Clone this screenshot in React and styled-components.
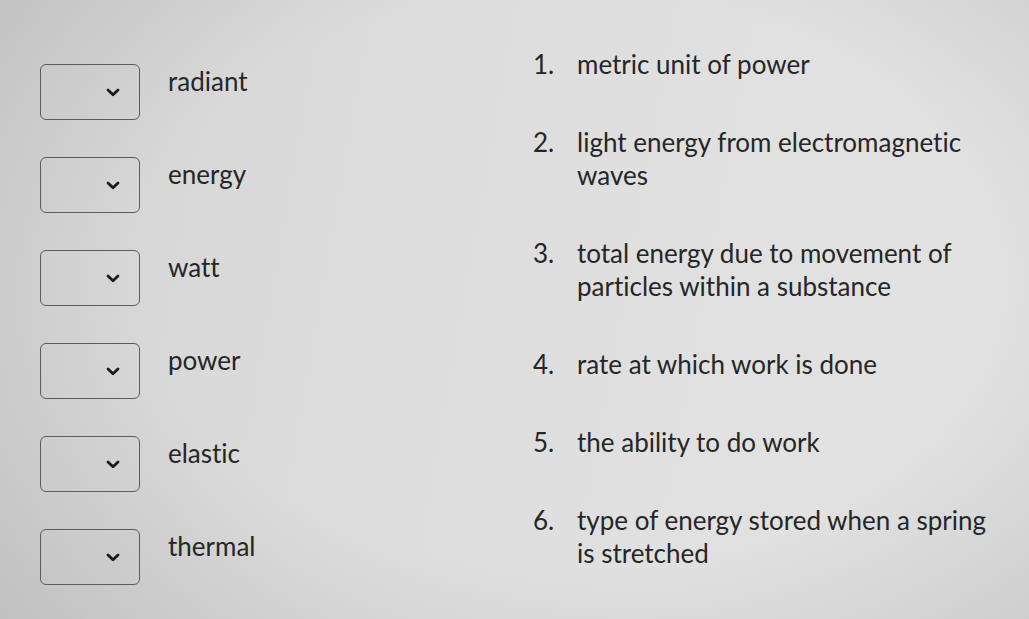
import React from "react";
import styled, { createGlobalStyle } from "styled-components";

const GlobalStyle = createGlobalStyle`
  html, body {
    margin: 0;
    padding: 0;
  }
  body {
    font-family: Lato, "Open Sans", sans-serif;
    color: #262626;
    font-variant-ligatures: none;
  }
`;

// screen is lit from the middle, darker toward the edges
const Page = styled.div`
  width: 1029px;
  height: 619px;
  overflow: hidden;
  box-sizing: border-box;
  display: flex;
  background:
    radial-gradient(ellipse 75% 85% at 55% 45%, rgba(230, 230, 230, 0) 55%, rgba(150, 150, 150, 0.35) 100%),
    linear-gradient(100deg, #d4d4d4 0%, #dcdcdc 35%, #e1e1e1 70%, #e2e2e2 100%);
`;

const TermColumn = styled.div`
  width: 533px;
  flex-shrink: 0;
  padding: 64px 0 0 40px;
  box-sizing: border-box;
  display: grid;
  grid-auto-rows: 56px;
  row-gap: 37px;
  align-content: start;
`;

const TermRow = styled.div`
  display: flex;
  align-items: flex-start;
`;

const Select = styled.div`
  width: 100px;
  height: 56px;
  box-sizing: border-box;
  border: 1.5px solid #5c5c5c;
  border-radius: 6px;
  display: flex;
  align-items: center;
  justify-content: flex-end;
  padding-right: 19px;
  flex-shrink: 0;
`;

const Term = styled.span`
  margin-left: 28px;
  padding-top: 1px;
  font-size: 26px;
  line-height: 33px;
`;

const DefinitionList = styled.ol`
  list-style: none;
  margin: 0;
  padding: 48px 0 0;
  display: flex;
  flex-direction: column;
  gap: 45px;
`;

const Definition = styled.li`
  display: flex;
  font-size: 26px;
  line-height: 33px;
`;

const Num = styled.span`
  width: 44px;
  flex-shrink: 0;
`;

const DefText = styled.span`
  width: 420px;
`;

function Chevron() {
  return (
    <svg width="14" height="9" viewBox="0 0 14 9">
      <path
        d="M2 2 L7 6.8 L12 2"
        fill="none"
        stroke="#1a1a1a"
        strokeWidth="2.8"
        strokeLinecap="round"
        strokeLinejoin="round"
      />
    </svg>
  );
}

const terms = ["radiant", "energy", "watt", "power", "elastic", "thermal"];

const definitions = [
  "metric unit of power",
  "light energy from electromagnetic waves",
  "total energy due to movement of particles within a substance",
  "rate at which work is done",
  "the ability to do work",
  "type of energy stored when a spring is stretched",
];

export default function App() {
  return (
    <>
      <GlobalStyle />
      <Page>
        <TermColumn>
          {terms.map((t) => (
            <TermRow key={t}>
              <Select>
                <Chevron />
              </Select>
              <Term>{t}</Term>
            </TermRow>
          ))}
        </TermColumn>
        <DefinitionList>
          {definitions.map((d, i) => (
            <Definition key={d}>
              <Num>{i + 1}.</Num>
              <DefText>{d}</DefText>
            </Definition>
          ))}
        </DefinitionList>
      </Page>
    </>
  );
}
